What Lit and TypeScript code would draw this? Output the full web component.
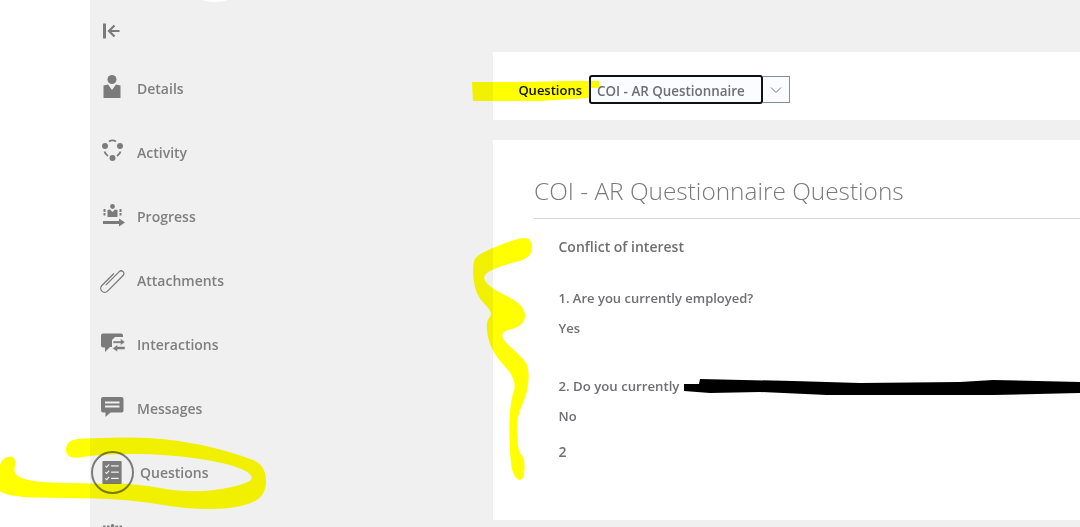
import { LitElement, html, css, svg } from "lit";
import { customElement } from "lit/decorators.js";

const G = "#7b7b7b";

const icons: Record<string, unknown> = {
  details: svg`<circle cx="12" cy="4.500" r="4.500" fill="${G}"/><path d="M3.500 10.500 L8 9.500 L12 15 L16 9.500 L20.500 10.500 V23 H3.500Z" fill="${G}"/>`,
  activity: svg`<g fill="${G}"><circle cx="5" cy="7" r="3"/><circle cx="20" cy="7" r="3"/><circle cx="12.500" cy="19" r="3"/></g><g fill="none" stroke="${G}" stroke-width="1.800"><path d="M9 2.500 C11 1.300 14 1.300 16 2.500"/><path d="M4.500 12.500 C5 14.500 6.500 16 8 17"/><path d="M20.500 12.500 C20 14.500 18.500 16 17 17"/></g>`,
  progress: svg`<g fill="${G}"><circle cx="12.5" cy="3.5" r="2.4"/><path d="M7.5 7 L10 6.5 L12.5 9 L15 6.5 L17.5 7 V14 H7.5Z"/><rect x="3.5" y="6" width="2" height="3"/><rect x="3.5" y="10" width="2" height="2.5"/><rect x="19.5" y="6" width="2" height="3"/><rect x="19.5" y="10" width="2" height="2.5"/><path d="M3 18 H19 V15.5 L25 19.5 L19 23.5 V21 H3Z"/></g>`,
  attach: svg`<g transform="translate(12.5 13.5) rotate(45)"><path d="M-1.500 8 V-11 A2.750 2.750 0 0 1 4 -11 V11 A4 4 0 0 1 -4 11 V-6" fill="none" stroke="${G}" stroke-width="1.300"/></g>`,
  interact: svg`<path d="M3 2.5 H21 Q23 2.5 23 4.5 V6 H15 L12 9 V13 H12 V16 H10 L5 21 V16.5 H3 Q1 16.5 1 14.5 V4.5 Q1 2.5 3 2.5Z" fill="${G}"/><path d="M13 10 H20.5 V7.5 L25 11 L20.5 14.500 V12.300 H13Z M25 15.500 H17.500 V13.500 L12.500 17.500 L17.500 21 V18.500 H25Z" fill="${G}" stroke="#f0f0f0" stroke-width=".5"/>`,
  message: svg`<path d="M3 2 H21.500 Q23.500 2 23.500 4 V15.500 Q23.500 17.500 21.500 17.500 H10.500 L5.500 22 V17.500 H3 Q1 17.500 1 15.500 V4 Q1 2 3 2Z" fill="${G}"/><rect x="5" y="6.500" width="14.500" height="2" fill="#f0f0f0"/><rect x="5" y="10.500" width="14.500" height="2" fill="#f0f0f0"/>`,
  questions: svg`<rect x="2.500" y="1" width="20" height="24" rx="1" fill="${G}"/><g fill="none" stroke="#f0f0f0" stroke-width="1.100"><path d="M5.500 6 L7 7.500 L9.500 4.500"/><path d="M5.500 12.500 L7 14 L9.500 11"/><path d="M5.500 19 L7 20.500 L9.500 17.500"/></g><g fill="#f0f0f0"><rect x="11.500" y="5.500" width="8" height="1.300"/><rect x="11.500" y="12" width="8" height="1.300"/><rect x="11.500" y="18.500" width="8" height="1.300"/></g>`,
  more: svg`<g fill="${G}"><circle cx="12.500" cy="2.800" r="1.700"/><rect x="3" y="2.500" width="2.500" height="1.600"/><rect x="7" y="2.500" width="2.500" height="1.600"/><rect x="15.500" y="2.500" width="2.500" height="1.600"/><rect x="19.500" y="2.500" width="2.500" height="1.600"/></g>`,
};

const nav = [
  { key: "details", label: "Details" },
  { key: "activity", label: "Activity" },
  { key: "progress", label: "Progress" },
  { key: "attach", label: "Attachments" },
  { key: "interact", label: "Interactions" },
  { key: "message", label: "Messages" },
  { key: "questions", label: "Questions", active: true },
  { key: "more", label: "" },
];

/* Rounds a marker outline through the midpoints of its corners, as a felt pen would. */
const smooth = (p: number[][]) => {
  const mid = (a: number[], b: number[]) => [(a[0] + b[0]) / 2, (a[1] + b[1]) / 2];
  let d = "";
  p.forEach((c, i) => {
    const prev = p[(i + p.length - 1) % p.length];
    const next = p[(i + 1) % p.length];
    const a = mid(prev, c);
    const b = mid(c, next);
    d += `${i ? "L" : "M"}${a[0]} ${a[1]} Q${c[0]} ${c[1]} ${b[0]} ${b[1]} `;
  });
  return d + "Z";
};

const loop = [[66,440],[90,438],[150,437],[200,444],[240,455],[266,465],[266,498],[233,509],[187,509],[133,500],[83,498],[-6,497],[-2,470],[3,457],[17,456],[12,481],[90,484],[133,483],[187,493],[233,488],[258,478],[233,464],[167,454],[100,454],[66,460]];
const squiggle = [[518,238],[532,238],[532,258],[503,265],[481,275],[490,288],[525,305],[525,326],[495,333],[523,358],[529,368],[528,392],[516,418],[518,452],[525,458],[524,480],[516,480],[510,465],[509,405],[518,380],[491,352],[485,322],[494,313],[475,295],[472,262],[480,253]];

@customElement("app-root")
export class AppRoot extends LitElement {
  static styles = css`
    :host {
      display: block;
      position: relative;
      width: 1080px;
      height: 527px;
      overflow: hidden;
      background: #f0f0f0;
      font-family: "Open Sans", "Noto Sans", sans-serif;
      font-size: 14px;
      font-weight: 600;
      color: #7f7f7f;
    }
    .frame { display: flex; height: 527px; }
    .gutter { width: 90px; flex: none; background: #fff; }
    .sidebar { width: 403px; flex: none; position: relative; }
    .notch {
      position: absolute; left: 105px; top: -14px;
      width: 40px; height: 16px; border-radius: 50%; background: #fff;
    }
    .collapse { height: 24px; padding: 19px 0 13px 12px; }
    .collapse svg { display: block; width: 20px; height: 24px; }
    .item { display: flex; align-items: center; height: 64px; padding-left: 10px; }
    .ico { width: 26px; height: 26px; flex: none; margin-right: 11px; display: block; }
    .ring {
      width: 39px; height: 39px; flex: none; margin: 0 6px 0 -9px;
      border: 2px solid #7b7b7b; border-radius: 50%;
      display: flex; align-items: center; justify-content: center;
    }
    .ring .ico { margin: 0; width: 25px; height: 25px; }
    .main { flex: 1; min-width: 0; padding-top: 52px; display: flex; flex-direction: column; gap: 20px; }
    .picker {
      height: 68px; background: #fff; display: flex; align-items: center;
      padding: 16px 0 9px 25px; box-sizing: border-box;
    }
    .picker label { color: #111; width: 64px; margin-right: 7px; text-align: right; font-size: 13px; }
    .select {
      width: 174px; height: 29px; box-sizing: border-box;
      border: 2px solid #111; border-radius: 3px; background: #fafcff;
      padding-left: 6px; line-height: 28px; font-size: 13.4px; color: #6f6f72;
    }
    .arrow {
      width: 27px; height: 27px; box-sizing: border-box;
      border: 1px solid #7d9399; border-left: none; background: #fafcff;
      display: flex; align-items: center; justify-content: center;
    }
    .card { height: 380px; background: #fff; padding-left: 41px; }
    h1 {
      margin: 0; height: 79px; box-sizing: border-box; padding-top: 33px;
      font-size: 24.4px; font-weight: 300; line-height: 36px; color: #7a7a7a;
      border-bottom: 1px solid #d6d6d6;
    }
    .body { padding-left: 24.5px; display: flex; flex-direction: column; color: #6f6f72; font-size: 13px; line-height: 20px; }
    .sec { margin-top: 18px; font-size: 14px; }
    .q1 { margin-top: 31px; }
    .a1 { margin-top: 10px; }
    .q2 { margin-top: 38px; font-size: 13.2px; }
    .a3 { margin-top: 16px; font-size: 14px; }
    .paint { position: absolute; left: 0; top: 0; width: 1080px; height: 527px; pointer-events: none; }
    .marker { mix-blend-mode: multiply; }
  `;

  render() {
    return html`
      <div class="frame">
        <div class="gutter"></div>
        <nav class="sidebar">
          <div class="notch"></div>
          <div class="collapse">
            <svg viewBox="0 0 20 24"><rect x="1" y="4.500" width="3" height="15" fill="${G}"/><path d="M17.500 12 H7 M12.500 6.500 L7 12 L12.500 17.500" fill="none" stroke="${G}" stroke-width="2.200"/></svg>
          </div>
          ${nav.map((n) => {
            const icon = html`<svg class="ico" viewBox="0 0 26 26">${icons[n.key]}</svg>`;
            return html`<div class="item">
              ${n.active ? html`<span class="ring">${icon}</span>` : icon}
              <span>${n.label}</span>
            </div>`;
          })}
        </nav>
        <main class="main">
          <section class="picker">
            <label>Questions</label>
            <div class="select">COI - AR Questionnaire</div>
            <div class="arrow">
              <svg width="12" height="8" viewBox="0 0 12 8"><path d="M1 1.500 L6 6.500 L11 1.500" fill="none" stroke="#777" stroke-width="1"/></svg>
            </div>
          </section>
          <section class="card">
            <h1>COI - AR Questionnaire Questions</h1>
            <div class="body">
              <div class="sec">Conflict of interest</div>
              <div class="q1">1. Are you currently employed?</div>
              <div class="a1">Yes</div>
              <div class="q2">2. Do you currently</div>
              <div class="a1">No</div>
              <div class="a3">2</div>
            </div>
          </section>
        </main>
      </div>
      <svg class="paint marker" viewBox="0 0 1080 527">
        <g fill="#ffff00">
          <path d="${smooth(loop)}"/>
          <path d="M472 82 L520 82 L570 81 L599 81 L599 88 L590 88 L590 98 L538 101 L473 101Z"/>
          <path d="${smooth(squiggle)}"/>
        </g>
      </svg>
      <svg class="paint" viewBox="0 0 1080 527">
        <path d="M684 384 L699 384 L700 379 L793 381 L860 383 L960 382 L993 380 L1080 382 L1080 393 L993 395 L827 395 L760 392 L710 393 L684 391Z" fill="#000"/>
      </svg>
    `;
  }
}
